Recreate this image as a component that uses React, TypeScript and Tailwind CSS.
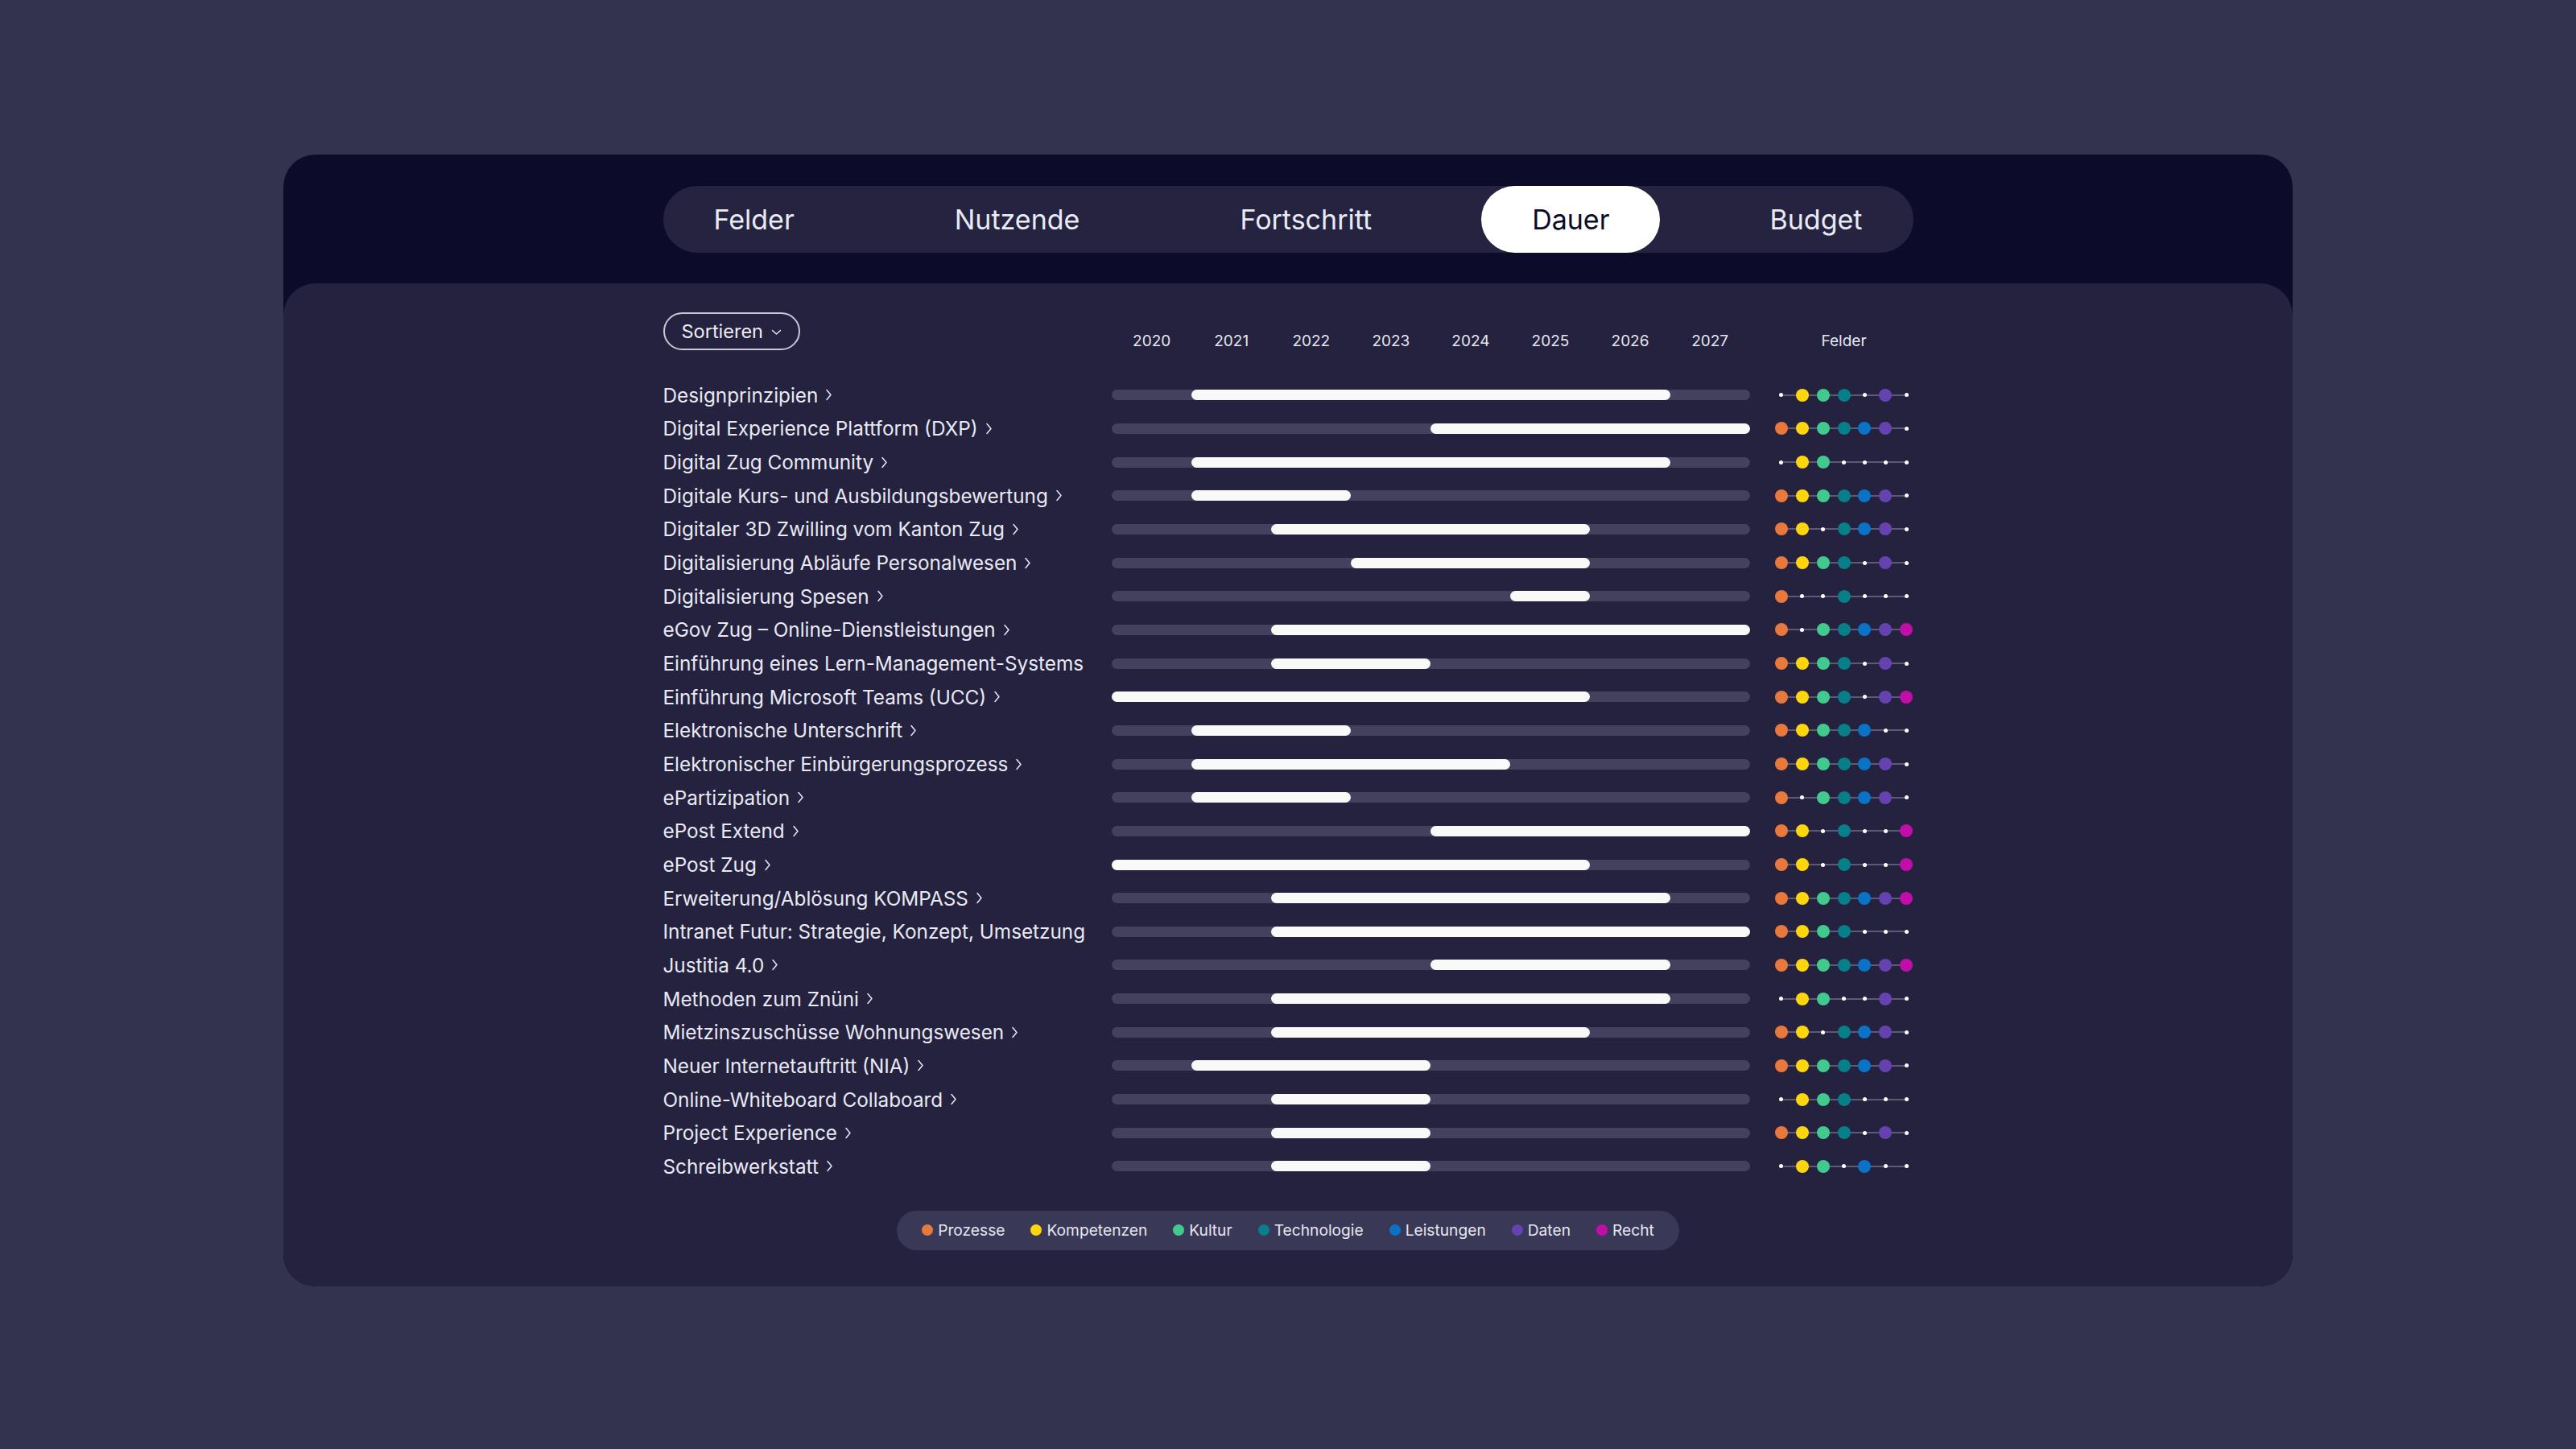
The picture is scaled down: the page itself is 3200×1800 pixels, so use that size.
import React from "react";

const FIELDS = [
  { name: "Prozesse", color: "bg-[#e8783b]" },
  { name: "Kompetenzen", color: "bg-[#ffd50b]" },
  { name: "Kultur", color: "bg-[#42c98e]" },
  { name: "Technologie", color: "bg-[#067f89]" },
  { name: "Leistungen", color: "bg-[#0a73c6]" },
  { name: "Daten", color: "bg-[#6443b1]" },
  { name: "Recht", color: "bg-[#c20ea8]" },
];

const TABS = ["Felder", "Nutzende", "Fortschritt", "Dauer", "Budget"];
const YEARS = ["2020", "2021", "2022", "2023", "2024", "2025", "2026", "2027"];

// [label, start unit, end unit, fields mask]
const PROJECTS: [string, number, number, string][] = [
  ["Designprinzipien", 1, 7, "0111010"],
  ["Digital Experience Plattform (DXP)", 4, 8, "1111110"],
  ["Digital Zug Community", 1, 7, "0110000"],
  ["Digitale Kurs- und Ausbildungsbewertung", 1, 3, "1111110"],
  ["Digitaler 3D Zwilling vom Kanton Zug", 2, 6, "1101110"],
  ["Digitalisierung Abläufe Personalwesen", 3, 6, "1111010"],
  ["Digitalisierung Spesen", 5, 6, "1001000"],
  ["eGov Zug – Online-Dienstleistungen", 2, 8, "1011111"],
  ["Einführung eines Lern-Management-Systems", 2, 4, "1111010"],
  ["Einführung Microsoft Teams (UCC)", 0, 6, "1111011"],
  ["Elektronische Unterschrift", 1, 3, "1111100"],
  ["Elektronischer Einbürgerungsprozess", 1, 5, "1111110"],
  ["ePartizipation", 1, 3, "1011110"],
  ["ePost Extend", 4, 8, "1101001"],
  ["ePost Zug", 0, 6, "1101001"],
  ["Erweiterung/Ablösung KOMPASS", 2, 7, "1111111"],
  ["Intranet Futur: Strategie, Konzept, Umsetzung", 2, 8, "1111000"],
  ["Justitia 4.0", 4, 7, "1111111"],
  ["Methoden zum Znüni", 2, 7, "0110010"],
  ["Mietzinszuschüsse Wohnungswesen", 2, 6, "1101110"],
  ["Neuer Internetauftritt (NIA)", 1, 4, "1111110"],
  ["Online-Whiteboard Collaboard", 2, 4, "0111000"],
  ["Project Experience", 2, 4, "1111010"],
  ["Schreibwerkstatt", 2, 4, "0110100"],
];

const Chevron = () => (
  <svg width="9" height="15" viewBox="0 0 9 15" fill="none" className="ml-[9px]">
    <path d="M2 1.5l5 6-5 6" stroke="currentColor" strokeWidth="1.5" strokeLinecap="round" strokeLinejoin="round" />
  </svg>
);

const FieldDots = ({ mask }: { mask: string }) => (
  <div className="relative w-[172px] h-[16px] flex justify-between ml-[31px]">
    <div className="absolute left-[8px] right-[8px] top-[7px] h-[2px] bg-[#5c5a77]" />
    {FIELDS.map((f, i) => (
      <div key={f.name} className="relative w-[16px] h-[16px] flex items-center justify-center">
        {mask[i] === "1" ? (
          <div className={`w-[16px] h-[16px] rounded-full ${f.color}`} />
        ) : (
          <div className="w-[5px] h-[5px] rounded-full bg-white" />
        )}
      </div>
    ))}
  </div>
);

const Row = ({ project }: { project: [string, number, number, string] }) => {
  const [label, start, end, mask] = project;
  return (
    <div className="flex items-center h-[41.67px]">
      <div className="w-[558px] pr-[26px]">
        {/* the chevron wraps out of sight when the label is too long */}
        <div className="h-[32px] overflow-hidden flex flex-wrap items-center text-[24.3px] leading-[32px] text-[#e9e9f3]">
          <span className="whitespace-nowrap">{label}</span>
          <span className="h-[32px] flex items-center">
            <Chevron />
          </span>
        </div>
      </div>
      <div className="relative w-[793px] h-[13px] rounded-full bg-[#43415d]">
        <div
          className="absolute top-0 h-[13px] rounded-full bg-[#f8f9f8]"
          style={{ left: `${(start / 8) * 100}%`, width: `${((end - start) / 8) * 100}%` }}
        />
      </div>
      <FieldDots mask={mask} />
    </div>
  );
};

export default function App() {
  return (
    <div
      className="min-h-screen w-full bg-[#34334f] flex justify-center pt-[192px]"
      style={{ fontFamily: "Inter, 'Liberation Sans', sans-serif" }}
    >
      <div className="w-[2496px] h-[1406px] rounded-[40px] bg-[#0c0b2a] flex flex-col overflow-hidden">
        {/* tab header */}
        <div className="h-[160px] flex items-center justify-center">
          <div className="w-[1553px] h-[83px] rounded-full bg-[#25233f] flex justify-between">
            {TABS.map((t) =>
              t === "Dauer" ? (
                <div key={t} className="px-[63px] rounded-full bg-white flex items-center text-[34px] text-[#0c0b2a]">
                  {t}
                </div>
              ) : (
                <div key={t} className="px-[63px] flex items-center text-[34px] text-[#e8eaf5]">
                  {t}
                </div>
              )
            )}
          </div>
        </div>

        {/* content panel */}
        <div className="flex-1 rounded-[40px] bg-[#24223f] flex justify-center pt-[36px]">
          <div className="w-[1553px] flex flex-col">
            <div className="flex items-end">
              <div className="w-[558px]">
                <button className="h-[47px] px-[21px] rounded-full border-[2px] border-[#c9c8d8] flex items-center gap-[10px] text-[23.5px] text-[#eeeef6]">
                  Sortieren
                  <svg width="13" height="8" viewBox="0 0 13 8" fill="none" className="mt-[3px]">
                    <path d="M1.5 1.5l5 4.5 5-4.5" stroke="currentColor" strokeWidth="1.4" strokeLinecap="round" strokeLinejoin="round" />
                  </svg>
                </button>
              </div>
              <div className="w-[793px] grid grid-cols-8 mb-[1px]">
                {YEARS.map((y) => (
                  <div key={y} className="text-center text-[19px] leading-[20px] text-[#e6e6f0]">
                    {y}
                  </div>
                ))}
              </div>
              <div className="w-[172px] ml-[31px] mb-[1px] text-center text-[19px] leading-[20px] text-[#e6e6f0]">
                Felder
              </div>
            </div>

            <div className="mt-[35px] flex flex-col">
              {PROJECTS.map((p) => (
                <Row key={p[0]} project={p} />
              ))}
            </div>

            <div className="mt-[34px] flex justify-center">
              <div className="h-[49px] px-[31px] rounded-full bg-[#3a3857] flex items-center gap-[32px]">
                {FIELDS.map((f) => (
                  <div key={f.name} className="flex items-center gap-[6px] text-[19.2px] text-[#e6e6f0]">
                    <div className={`w-[14px] h-[14px] rounded-full ${f.color}`} />
                    {f.name}
                  </div>
                ))}
              </div>
            </div>
          </div>
        </div>
      </div>
    </div>
  );
}
